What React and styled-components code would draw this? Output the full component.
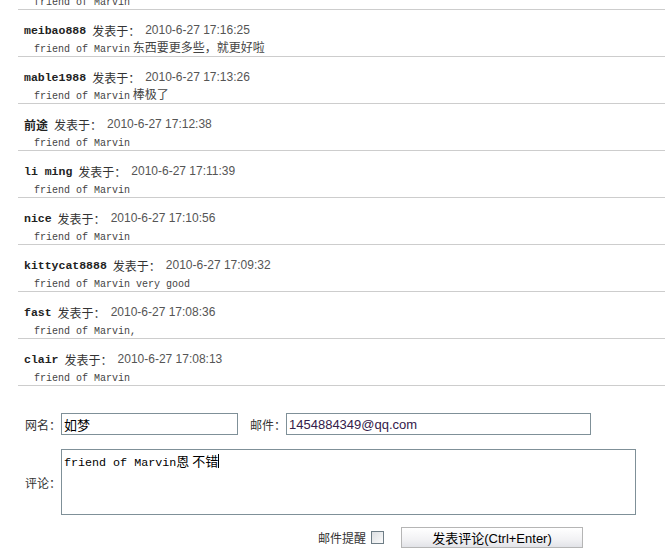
import React from 'react';
import styled, { createGlobalStyle } from 'styled-components';

const GlobalStyle = createGlobalStyle`
  html, body {
    margin: 0;
    padding: 0;
    background: #fff;
    overflow: hidden;
  }
  body {
    font-family: "Liberation Sans", "Noto Sans CJK SC", sans-serif;
    color: #333;
  }
`;

const Page = styled.div`
  width: 665px;
  height: 550px;
  overflow: hidden;
`;

const CommentList = styled.ul`
  list-style: none;
  margin: -37px 0 0 18px;
  padding: 0;
`;

const Item = styled.li`
  padding: 12px 0 0 6px;
  border-bottom: 1px solid #cdcdcd;
  height: 34px;
`;

const Head = styled.div`
  display: flex;
  align-items: center;
  height: 16px;
  white-space: nowrap;
`;

const Author = styled.b`
  font-family: ${p => (p.$cjk ? '"Noto Sans CJK SC", sans-serif' : '"Liberation Mono", "Noto Sans CJK SC", monospace')};
  font-size: ${p => (p.$cjk ? 12 : 11.5)}px;
  font-weight: 700;
  color: #222;
  margin-right: 6px;
`;

const PostedAt = styled.span`
  font-family: "Noto Sans CJK SC", sans-serif;
  font-size: 12px;
  color: #333;
  margin-right: 5px;
`;

const Stamp = styled.span`
  font-family: "Liberation Sans", sans-serif;
  font-size: 12px;
  color: #555;
`;

const Body = styled.div`
  height: 18px;
  line-height: 18px;
  padding-left: 10px;
  white-space: nowrap;
  color: #444;
`;

const Mono = styled.span`
  font-family: "Liberation Mono", monospace;
  font-size: ${p => p.$size || 10}px;
`;

const Cjk = styled.span`
  font-family: "Noto Sans CJK SC", sans-serif;
  font-size: ${p => p.$size || 12}px;
`;

const Form = styled.form`
  padding: 27px 0 0 25px;
  display: flex;
  flex-direction: column;
  gap: 14px;
`;

const Row = styled.div`
  display: flex;
  align-items: center;
`;

const Label = styled.label`
  font-family: "Noto Sans CJK SC", sans-serif;
  font-size: 12px;
  color: #333;
  width: 36px;
  margin-left: ${p => p.$gap || 0}px;
  flex-shrink: 0;
`;

const Field = styled.input`
  box-sizing: border-box;
  width: ${p => p.$w}px;
  height: 22px;
  margin: 0;
  padding: 0 2px;
  border: 1px solid #7f9098;
  outline: none;
  font-family: "Liberation Sans", "Noto Sans CJK SC", sans-serif;
  font-size: 13px;
  color: ${p => p.$color || '#000'};
`;

const TextBox = styled.div`
  box-sizing: border-box;
  width: 575px;
  height: 66px;
  border: 1px solid #7f9098;
  padding: 3px 2px;
  color: #000;
  line-height: 16px;
  white-space: nowrap;
`;

const Caret = styled.span`
  display: inline-block;
  width: 1px;
  height: 14px;
  background: #000;
  vertical-align: -2px;
`;

const Footer = styled.div`
  display: flex;
  align-items: center;
  margin-top: -2px;
  padding-left: 293px;
`;

const Notify = styled.label`
  display: flex;
  align-items: center;
  gap: 5px;
  font-family: "Noto Sans CJK SC", sans-serif;
  font-size: 12px;
  color: #333;
`;

const Check = styled.span`
  display: inline-block;
  width: 11px;
  height: 11px;
  border: 1px solid #6e7d86;
  background: linear-gradient(135deg, #dcdfe2, #fbfbfb);
`;

const Submit = styled.button`
  box-sizing: border-box;
  width: 182px;
  height: 21px;
  margin-left: 17px;
  padding: 0;
  border: 1px solid #b5b5b5;
  background: linear-gradient(#ffffff, #f2f2f4 60%, #e2e3e8);
  font-family: "Liberation Sans", "Noto Sans CJK SC", sans-serif;
  font-size: 13px;
  color: #000;
`;

// the first entry is scrolled mostly out of view at the top
const comments = [
  { name: 'someone', time: '2010-6-27 17:20:02', text: '' },
  { name: 'meibao888', time: '2010-6-27 17:16:25', text: '东西要更多些，就更好啦' },
  { name: 'mable1988', time: '2010-6-27 17:13:26', text: '棒极了' },
  { name: '前途', time: '2010-6-27 17:12:38', text: '', cjk: true },
  { name: 'li ming', time: '2010-6-27 17:11:39', text: '' },
  { name: 'nice', time: '2010-6-27 17:10:56', text: '' },
  { name: 'kittycat8888', time: '2010-6-27 17:09:32', text: ' very good', mono: true },
  { name: 'fast', time: '2010-6-27 17:08:36', text: ',', mono: true },
  { name: 'clair', time: '2010-6-27 17:08:13', text: '' },
];

function Comment({ c }) {
  return (
    <Item>
      <Head>
        <Author $cjk={c.cjk}>{c.name}</Author>
        <PostedAt>发表于：</PostedAt>
        <Stamp>{c.time}</Stamp>
      </Head>
      <Body>
        <Mono>friend of Marvin</Mono>
        {c.text && (c.mono ? <Mono>{c.text}</Mono> : <Cjk> {c.text}</Cjk>)}
      </Body>
    </Item>
  );
}

export default function App() {
  return (
    <Page>
      <GlobalStyle />
      <CommentList>
        {comments.map(c => <Comment key={c.name} c={c} />)}
      </CommentList>
      <Form onSubmit={e => e.preventDefault()}>
        <Row>
          <Label>网名：</Label>
          <Field $w={177} defaultValue="如梦" />
          <Label $gap={12}>邮件：</Label>
          <Field $w={305} $color="#33204a" defaultValue="1454884349@qq.com" />
        </Row>
        <Row>
          <Label>评论：</Label>
          <TextBox>
            <Mono $size={11.7}>friend of Marvin</Mono>
            <Cjk $size={13}>恩 不错</Cjk>
            <Caret />
          </TextBox>
        </Row>
        <Footer>
          <Notify>邮件提醒<Check /></Notify>
          <Submit type="submit">发表评论(Ctrl+Enter)</Submit>
        </Footer>
      </Form>
    </Page>
  );
}
